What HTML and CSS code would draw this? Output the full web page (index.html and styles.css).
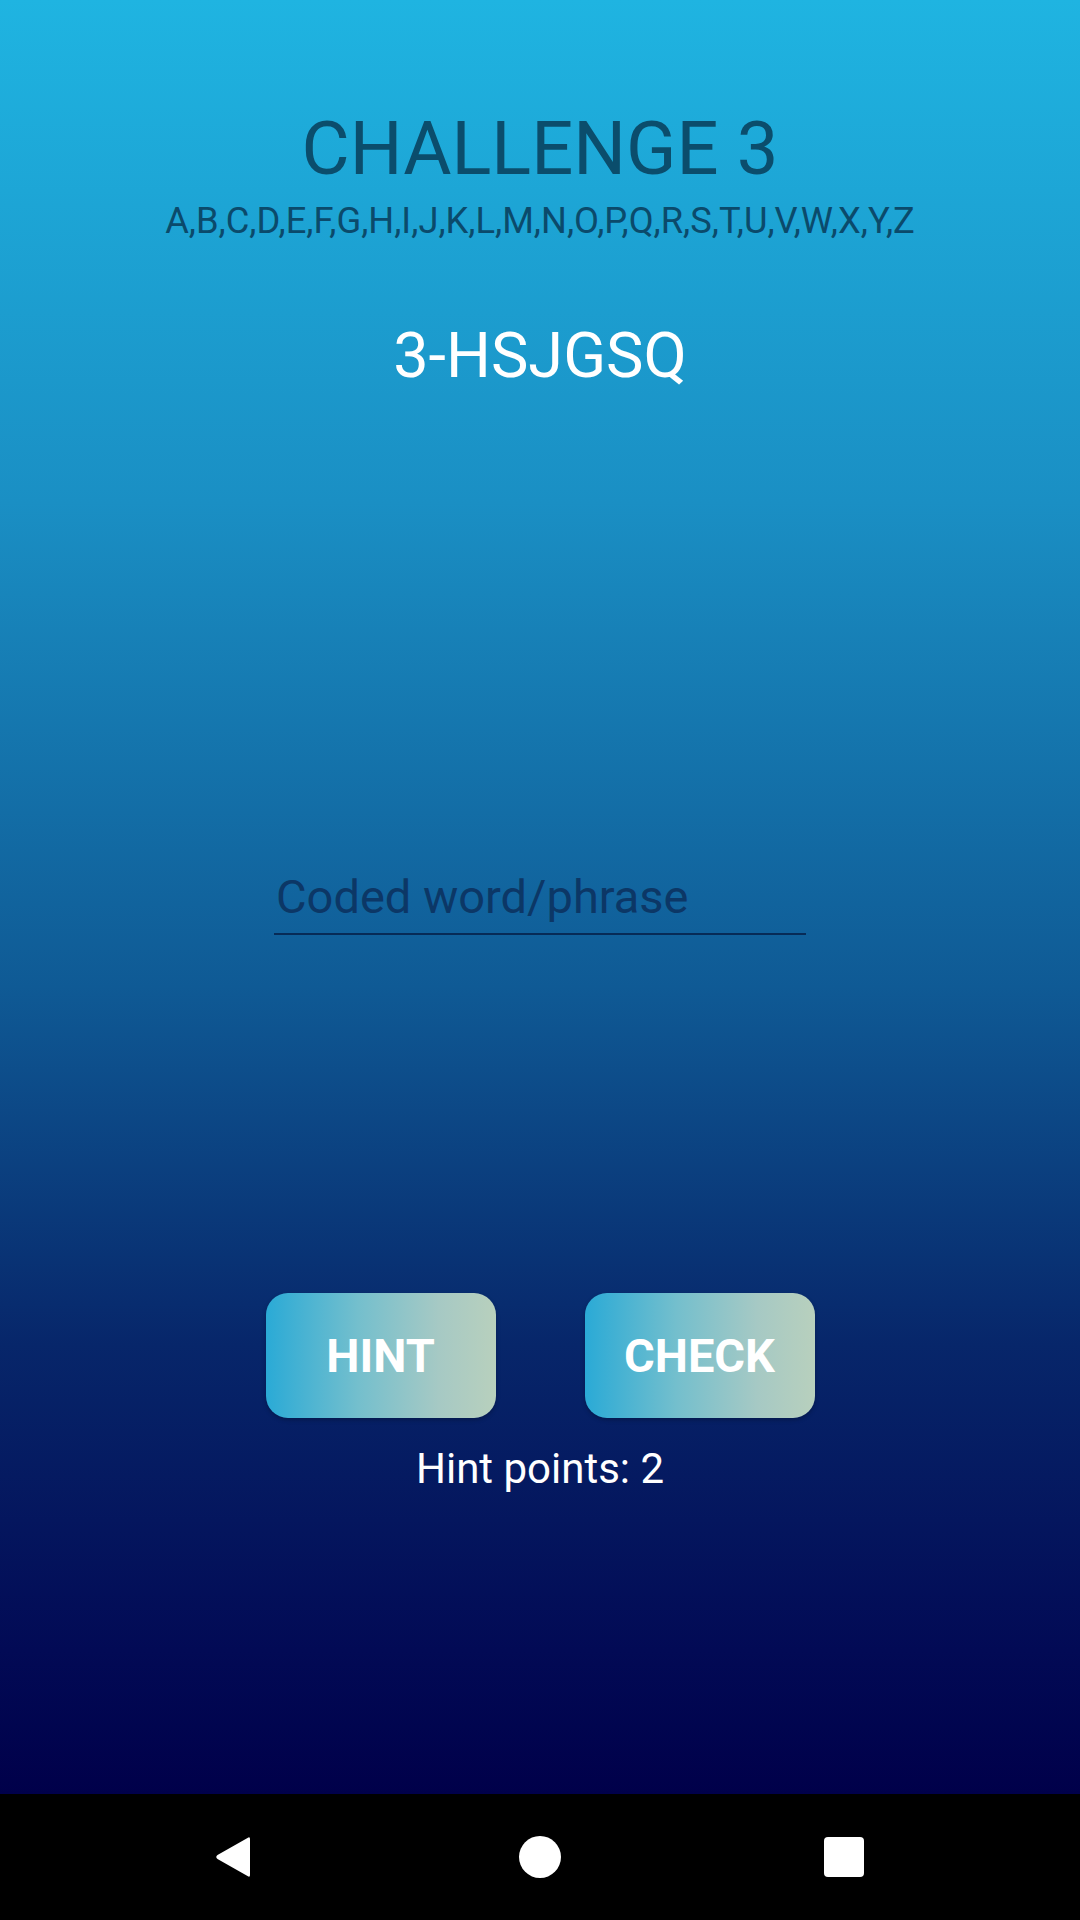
FILE: index.html
```html
<!DOCTYPE html>
<html>
<head>
<meta charset="utf-8">
<link rel="stylesheet" href="styles.css">
</head>
<body>
<div class="phone">
  <main class="screen">
    <h1 class="title">CHALLENGE 3</h1>
    <p class="alphabet">A,B,C,D,E,F,G,H,I,J,K,L,M,N,O,P,Q,R,S,T,U,V,W,X,Y,Z</p>
    <p class="code">3-HSJGSQ</p>
    <input class="answer" type="text" placeholder="Coded word/phrase">
    <div class="actions">
      <button class="btn">HINT</button>
      <button class="btn">CHECK</button>
    </div>
    <p class="points">Hint points: 2</p>
  </main>
  <nav class="navbar">
    <span class="nav-cell">
      <svg width="40" height="44" viewBox="0 0 40 44"><path d="M36 4 Q36 1 33.5 3 L3.5 20 Q1 22 3.5 24 L33.5 41 Q36 43 36 40 Z" fill="#fff"/></svg>
    </span>
    <span class="nav-cell"><span class="home"></span></span>
    <span class="nav-cell"><span class="recent"></span></span>
  </nav>
</div>
</body>
</html>
```
FILE: styles.css
```css
html, body {
  margin: 0;
  padding: 0;
}
body {
  width: 1080px;
  height: 1920px;
  overflow: hidden;
  font-family: Roboto, "Liberation Sans", sans-serif;
}
.phone {
  display: flex;
  flex-direction: column;
  height: 1920px;
}
.screen {
  height: 1794px;
  background: linear-gradient(to bottom, #1fb4e1 0%, #1a8fc4 28%, #0f5a95 55%, #07266a 75%, #020a55 92%, #00004a 100%);
  display: flex;
  flex-direction: column;
  align-items: center;
}
.title {
  margin: 105px 0 0;
  font-size: 74px;
  font-weight: 400;
  line-height: 87px;
  color: #0b4d6c;
}
.alphabet {
  margin: 8px 0 0;
  font-size: 36.3px;
  line-height: 42px;
  color: #0b4a6b;
}
.code {
  margin: 77px 0 0;
  font-size: 63px;
  line-height: 74px;
  color: #ffffff;
}
.answer {
  margin: 476px 0 0;
  width: 530px;
  height: 55px;
  box-sizing: content-box;
  padding: 0 0 9px 2px;
  border: none;
  border-bottom: 2px solid #072b57;
  background: transparent;
  font-family: Roboto, "Liberation Sans", sans-serif;
  font-size: 47px;
  line-height: 55px;
  color: #0c3766;
  outline: none;
}
.answer::placeholder {
  color: #0c3766;
  opacity: 1;
}
.actions {
  margin-top: 358px;
  display: flex;
  gap: 89px;
}
.btn {
  width: 230px;
  height: 125px;
  border: none;
  border-radius: 22px;
  background: linear-gradient(to right, #2aaad6 0%, #74bfcd 40%, #a6c9c4 75%, #b8d0bd 100%);
  box-shadow: 0 2px 4px rgba(0, 0, 0, 0.25);
  color: #ffffff;
  font-family: Roboto, "Liberation Sans", sans-serif;
  font-size: 47px;
  font-weight: 700;
  padding: 0;
}
.points {
  margin: 26px 0 0;
  font-size: 42px;
  line-height: 49px;
  color: #ffffff;
}
.navbar {
  height: 126px;
  background: #000000;
  display: flex;
  justify-content: center;
  align-items: center;
  gap: 178px;
}
.nav-cell {
  width: 126px;
  height: 126px;
  display: flex;
  align-items: center;
  justify-content: center;
}
.nav-cell svg {
  display: block;
  margin-left: -4px;
}
.home {
  width: 42px;
  height: 42px;
  border-radius: 50%;
  background: #ffffff;
}
.recent {
  width: 40px;
  height: 40px;
  border-radius: 4px;
  background: #ffffff;
}
```
